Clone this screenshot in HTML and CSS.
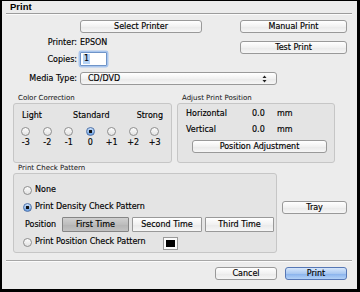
FILE: index.html
```html
<!DOCTYPE html>
<html>
<head>
<meta charset="utf-8">
<link rel="stylesheet" href="styles.css">
</head>
<body>
<div class="dialog">
  <div class="header"><span class="title">Print</span></div>

  <div class="top">
    <div class="top-left">
      <span></span>
      <div class="btn w-select">Select Printer</div>
      <span class="lbl">Printer:</span>
      <span class="val">EPSON</span>
      <span class="lbl lbl-copies">Copies:</span>
      <div class="field"><span class="sel-text">1</span></div>
    </div>
    <div class="top-right">
      <div class="btn">Manual Print</div>
      <div class="btn">Test Print</div>
    </div>
  </div>

  <div class="media">
    <span class="lbl">Media Type:</span>
    <div class="btn select">
      <span>CD/DVD</span>
      <svg class="arrows" width="5" height="8" viewBox="0 0 5 8"><path d="M0.5 3 L2.5 0.5 L4.5 3 Z M0.5 5 L2.5 7.5 L4.5 5 Z" fill="#222"/></svg>
    </div>
  </div>

  <div class="groups">
    <div class="group g-color">
      <div class="glabel">Color Correction</div>
      <div class="box color-box">
        <div class="scale-labels"><span>Light</span><span>Standard</span><span>Strong</span></div>
        <div class="scale">
          <span class="radio"></span><span class="radio"></span><span class="radio"></span><span class="radio on"></span><span class="radio"></span><span class="radio"></span><span class="radio"></span>
          <span>-3</span><span>-2</span><span>-1</span><span>0</span><span>+1</span><span>+2</span><span>+3</span>
        </div>
      </div>
    </div>
    <div class="group g-adjust">
      <div class="glabel">Adjust Print Position</div>
      <div class="box adjust-box">
        <div class="adj-grid">
          <span>Horizontal</span><span>0.0</span><span>mm</span>
          <span>Vertical</span><span>0.0</span><span>mm</span>
        </div>
        <div class="btn w-posadj">Position Adjustment</div>
      </div>
    </div>
  </div>

  <div class="check-row">
    <div class="group g-check">
      <div class="glabel">Print Check Pattern</div>
      <div class="box check-box">
        <div class="opt"><span class="radio"></span><span>None</span></div>
        <div class="opt"><span class="radio on"></span><span>Print Density Check Pattern</span></div>
        <div class="pos-row">
          <span class="pos-lbl">Position</span>
          <div class="btn seg pressed w-first">First Time</div>
          <div class="btn seg w-second">Second Time</div>
          <div class="btn seg w-third">Third Time</div>
        </div>
        <div class="opt"><span class="radio"></span><span class="opt-text">Print Position Check Pattern</span><span class="swatch"><span class="swatch-in"></span></span></div>
      </div>
    </div>
    <div class="btn w-tray">Tray</div>
  </div>

  <div class="sep"></div>

  <div class="footer">
    <div class="btn w-foot">Cancel</div>
    <div class="btn w-foot default">Print</div>
  </div>
</div>
</body>
</html>
```

FILE: styles.css
```css
* { box-sizing: border-box; }
html, body { margin: 0; padding: 0; background: #000; }
body { width: 360px; height: 292px; overflow: hidden; }

.dialog {
  width: 360px;
  height: 292px;
  border-top: 1px solid #000;
  border-left: 2px solid #000;
  border-right: 3px solid #000;
  border-bottom: 3px solid #000;
  background: #ececec;
  font-family: "DejaVu Sans", sans-serif;
  font-size: 8px;
  color: #000;
  -webkit-text-stroke: 0.15px #000;
}

.header {
  height: 13px;
  margin: 0 5px 0 4px;
  padding-left: 4px;
  border-bottom: 1px solid #9c9c9c;
  box-shadow: 0 1px 0 #fbfbfb;
}
.title {
  font-family: "Liberation Sans", sans-serif;
  font-weight: bold;
  font-size: 9.5px;
  line-height: 12px;
  display: block;
  -webkit-text-stroke: 0;
}

.btn {
  height: 13px;
  border: 1px solid #999;
  border-radius: 3px;
  background: linear-gradient(#ffffff, #f1f1f1 50%, #e9e9e9 51%, #f6f6f6);
  display: flex;
  align-items: center;
  justify-content: center;
  line-height: 11px;
  white-space: nowrap;
}

.top {
  display: flex;
  margin-top: 6px;
}
.top-left {
  display: grid;
  grid-template-columns: 75px 122px;
  column-gap: 3px;
  row-gap: 4px;
  align-items: center;
  width: 200px;
}
.lbl { text-align: right; line-height: 11px; }
.val { line-height: 11px; }
.field {
  width: 27px;
  height: 14px;
  background: #fff;
  border: 1px solid #6f94c8;
  box-shadow: 0 0 0 1.5px #a9c6ee;
  border-radius: 1px;
  padding: 1px 0 0 2px;
}
.sel-text {
  display: inline-block;
  background: #b5d3f6;
  line-height: 10px;
  padding: 0 1px;
}
.top-right {
  margin-left: auto;
  margin-right: 10px;
  width: 107px;
  display: flex;
  flex-direction: column;
  gap: 8px;
}

.media {
  display: flex;
  align-items: center;
  gap: 3px;
  margin-top: 6px;
}
.media .lbl { width: 75px; }
.select {
  width: 197px;
  justify-content: space-between;
  padding: 0 9px 0 7px;
}
.arrows { display: block; }

.groups {
  display: flex;
  gap: 5px;
  margin-top: 8px;
  padding-left: 11px;
}
.glabel {
  font-size: 7px;
  line-height: 10px;
  padding-left: 5px;
  color: #222;
  -webkit-text-stroke: 0.05px #222;
}
.box {
  border: 1px solid #c6c6c6;
  border-radius: 3px;
  background: #e4e4e4;
}
.g-color { width: 159px; }
.g-adjust { width: 158px; }

.color-box { height: 60px; padding-top: 7px; }
.scale-labels {
  display: flex;
  justify-content: space-between;
  padding: 0 8px;
  line-height: 10px;
}
.scale-labels span:nth-child(2) { margin-left: 4px; }
.scale {
  display: grid;
  grid-template-columns: repeat(7, 21.5px);
  grid-template-rows: 10px 10px;
  row-gap: 2px;
  justify-items: center;
  align-items: center;
  margin-top: 5px;
  padding-left: 1px;
  line-height: 10px;
}

.radio {
  display: inline-block;
  width: 9px;
  height: 9px;
  border-radius: 50%;
  border: 1px solid #8e8e8e;
  background: linear-gradient(#fcfcfc, #e2e2e2);
  flex: none;
}
.radio.on {
  border-color: #4f72a8;
  background: radial-gradient(circle, #111 0 1.4px, transparent 1.9px), linear-gradient(#c8def8, #6b9fe2);
}

.adjust-box { height: 60px; padding: 4px 0 0 0; }
.adj-grid {
  display: grid;
  grid-template-columns: 66px 25px auto;
  grid-auto-rows: 12px;
  row-gap: 4px;
  align-items: center;
  padding-left: 8px;
  line-height: 12px;
}
.w-posadj { width: 135px; margin: 4px 0 0 14px; }

.check-row {
  display: flex;
  align-items: flex-start;
  gap: 5px;
  padding-left: 11px;
}
.g-check { width: 264px; }
.check-box {
  height: 80px;
  padding: 10px 0 0 9px;
  display: flex;
  flex-direction: column;
  gap: 5px;
}
.opt {
  display: flex;
  align-items: center;
  gap: 3px;
  height: 12px;
  line-height: 12px;
}
.pos-row {
  display: flex;
  align-items: center;
  gap: 3px;
  height: 15px;
  margin-top: -1px;
  margin-bottom: -1px;
  padding-left: 2px;
}
.pos-lbl { width: 34px; }
.seg { height: 15px; border-radius: 1px; }
.pressed {
  background: linear-gradient(#d0d0d0, #bdbdbd 50%, #b4b4b4 51%, #c2c2c2);
  border-color: #858585;
}
.w-first { width: 67px; }
.w-second { width: 70px; }
.w-third { width: 69px; }
.opt-text { width: 125px; }
.swatch {
  width: 15px;
  height: 13px;
  border: 1px solid #9a9a9a;
  background: #fafafa;
  padding: 2px;
  display: block;
  margin-top: 2px;
}
.swatch-in { display: block; width: 100%; height: 100%; background: #000; }

.w-tray { width: 65px; margin-top: 38px; }

.sep {
  margin: 7px 5px 0 4px;
  border-top: 1px solid #a6a6a6;
  box-shadow: 0 1px 0 #fbfbfb;
}

.footer {
  display: flex;
  justify-content: flex-end;
  gap: 8px;
  margin: 6px 10px 0 0;
}
.w-foot { width: 62px; }
.default {
  border-color: #5677b5;
  background: linear-gradient(#d6e6fb, #a9c8f1 50%, #86b0ec 51%, #b4d2f7);
}
.w-select { width: 122px; }
```
